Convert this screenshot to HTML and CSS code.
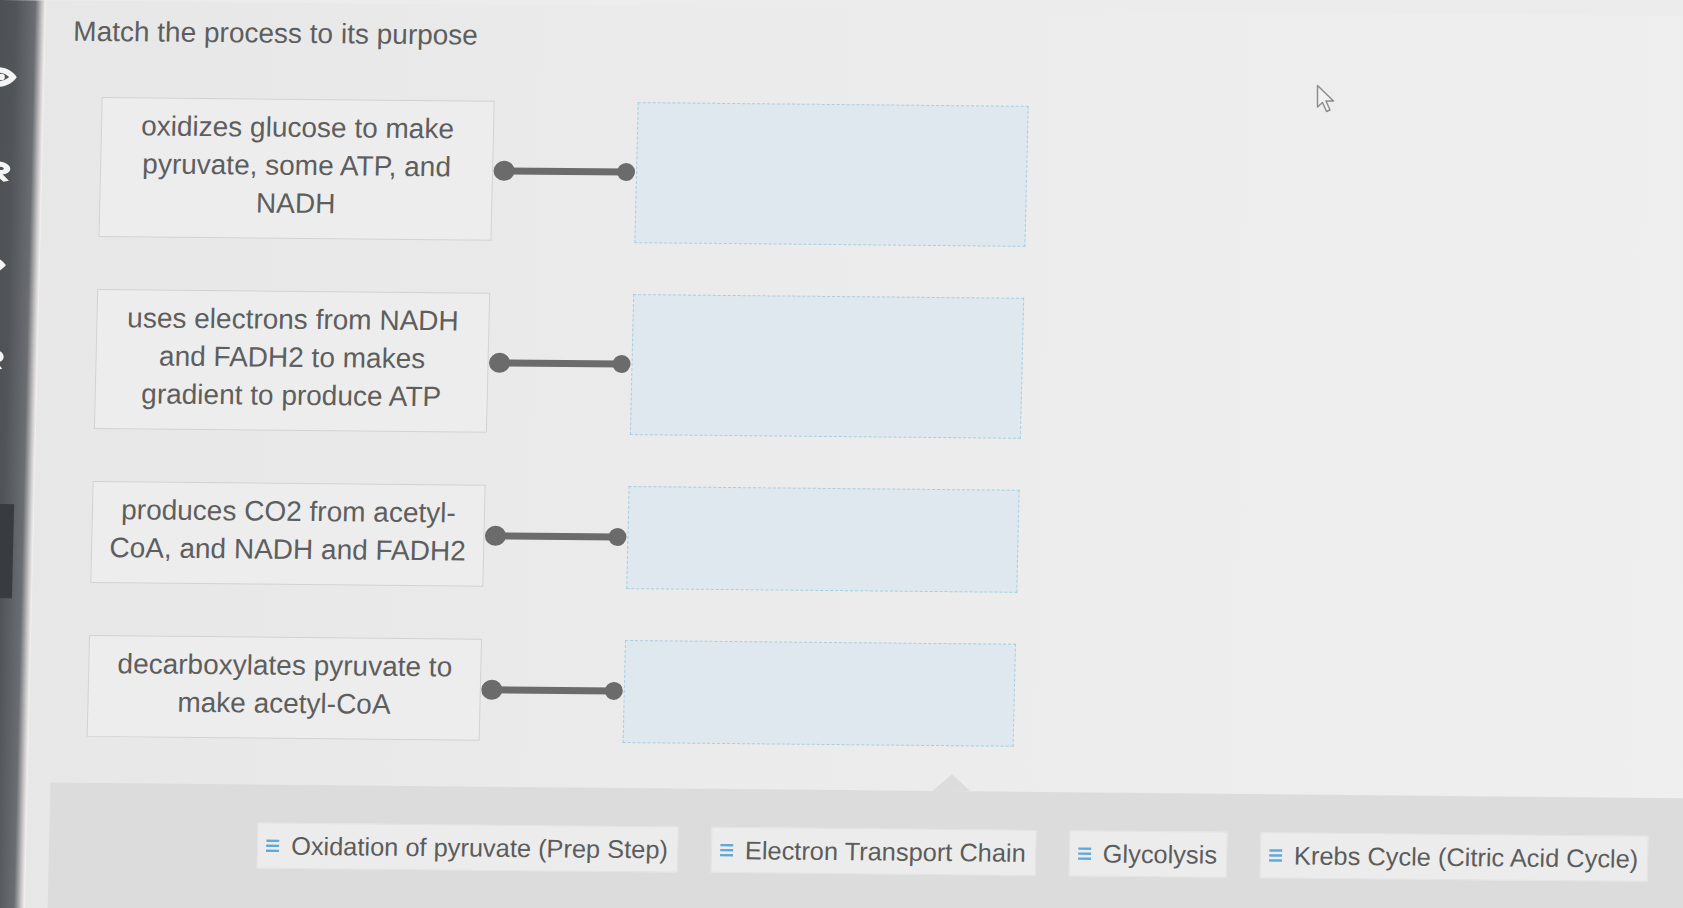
FILE: index.html
```html
<!DOCTYPE html>
<html lang="en">
<head>
<meta charset="utf-8">
<title>Match the process to its purpose</title>
<link rel="stylesheet" href="styles.css">
</head>
<body>
<div class="page">
  <aside class="sidebar">
    <svg class="side-icon" viewBox="0 0 20 24" width="22" height="26"><path d="M0 3 C7 3 14 7 17 12 C14 17 7 21 0 21 L0 16 C4 16 8 14 10 12 C8 10 4 8 0 8 Z" fill="#f4f4f4"/><circle cx="3" cy="12" r="3" fill="#f4f4f4"/></svg>
    <svg class="side-icon" viewBox="0 0 20 24" width="22" height="26"><path d="M0 3 C7 3 13 6 13 10 C13 13 9 15 6 15 L12 21 L7 22 L0 16 L0 11 C4 11 7 11 7 10 C7 8 4 8 0 8 Z" fill="#f4f4f4"/></svg>
    <svg class="side-icon" viewBox="0 0 20 24" width="22" height="26"><path d="M0 4 C5 6 9 9 11 12 C9 15 5 18 0 20 L0 15 C2 14 4 13 5 12 C4 11 2 10 0 9 Z" fill="#f4f4f4"/></svg>
    <svg class="side-icon" viewBox="0 0 20 24" width="22" height="26"><path d="M0 3 C6 3 11 6 11 10 C11 13 8 15 5 15 L10 21 L6 22 L0 16 L0 11 C3 11 6 11 6 10 C6 8 3 8 0 8 Z" fill="#f4f4f4"/></svg>
    <svg class="side-icon" viewBox="0 0 20 24" width="22" height="26"><path d="M0 8 C2 9 4 10 6 12 C4 14 2 15 0 16 Z" fill="#f4f4f4"/></svg>
    <div class="side-active"></div>
  </aside>
  <main class="main">
    <h1 class="title">Match the process to its purpose</h1>
    <div class="pairs">
      <div class="pair">
        <div class="prompt">oxidizes glucose to make pyruvate, some ATP, and NADH</div>
        <svg class="connector" viewBox="0 0 143 22" width="143" height="22"><line x1="11" y1="11" x2="133" y2="11" stroke="#6b6b6b" stroke-width="7"/><ellipse cx="11" cy="11" rx="10.5" ry="10" fill="#6b6b6b"/><circle cx="133" cy="11" r="9" fill="#6b6b6b"/></svg>
        <div class="drop"></div>
      </div>
      <div class="pair">
        <div class="prompt">uses electrons from NADH and FADH2 to makes gradient to produce ATP</div>
        <svg class="connector" viewBox="0 0 143 22" width="143" height="22"><line x1="11" y1="11" x2="133" y2="11" stroke="#6b6b6b" stroke-width="7"/><ellipse cx="11" cy="11" rx="10.5" ry="10" fill="#6b6b6b"/><circle cx="133" cy="11" r="9" fill="#6b6b6b"/></svg>
        <div class="drop"></div>
      </div>
      <div class="pair">
        <div class="prompt">produces CO2 from acetyl-CoA, and NADH and FADH2</div>
        <svg class="connector" viewBox="0 0 143 22" width="143" height="22"><line x1="11" y1="11" x2="133" y2="11" stroke="#6b6b6b" stroke-width="7"/><ellipse cx="11" cy="11" rx="10.5" ry="10" fill="#6b6b6b"/><circle cx="133" cy="11" r="9" fill="#6b6b6b"/></svg>
        <div class="drop"></div>
      </div>
      <div class="pair">
        <div class="prompt">decarboxylates pyruvate to make acetyl-CoA</div>
        <svg class="connector" viewBox="0 0 143 22" width="143" height="22"><line x1="11" y1="11" x2="133" y2="11" stroke="#6b6b6b" stroke-width="7"/><ellipse cx="11" cy="11" rx="10.5" ry="10" fill="#6b6b6b"/><circle cx="133" cy="11" r="9" fill="#6b6b6b"/></svg>
        <div class="drop"></div>
      </div>
    </div>
    <div class="bank">
      <div class="chips">
        <div class="chip"><svg class="grip" viewBox="0 0 14 16" width="14" height="16"><rect x="0" y="2" width="13" height="2.4" fill="#62a9d9"/><rect x="0" y="7" width="13" height="2.4" fill="#62a9d9"/><rect x="0" y="12" width="13" height="2.4" fill="#62a9d9"/></svg><span>Oxidation of pyruvate (Prep Step)</span></div>
        <div class="chip"><svg class="grip" viewBox="0 0 14 16" width="14" height="16"><rect x="0" y="2" width="13" height="2.4" fill="#62a9d9"/><rect x="0" y="7" width="13" height="2.4" fill="#62a9d9"/><rect x="0" y="12" width="13" height="2.4" fill="#62a9d9"/></svg><span>Electron Transport Chain</span></div>
        <div class="chip"><svg class="grip" viewBox="0 0 14 16" width="14" height="16"><rect x="0" y="2" width="13" height="2.4" fill="#62a9d9"/><rect x="0" y="7" width="13" height="2.4" fill="#62a9d9"/><rect x="0" y="12" width="13" height="2.4" fill="#62a9d9"/></svg><span>Glycolysis</span></div>
        <div class="chip"><svg class="grip" viewBox="0 0 14 16" width="14" height="16"><rect x="0" y="2" width="13" height="2.4" fill="#62a9d9"/><rect x="0" y="7" width="13" height="2.4" fill="#62a9d9"/><rect x="0" y="12" width="13" height="2.4" fill="#62a9d9"/></svg><span>Krebs Cycle (Citric Acid Cycle)</span></div>
      </div>
    </div>
  </main>
</div>
<svg class="cursor" viewBox="0 0 22 30" width="22" height="30"><path d="M1.5 1.5 L1.5 23 L6.5 18.5 L10.5 27.5 L14 26 L10 17 L17.5 17 Z" fill="#f1f1f1" stroke="#8a8a8a" stroke-width="1.4" stroke-linejoin="round"/></svg>
</body>
</html>
```
FILE: styles.css
```css
html, body {
  margin: 0;
  padding: 0;
}
body {
  width: 1683px;
  height: 908px;
  overflow: hidden;
  background: #ececec;
  font-family: "Liberation Sans", Arial, sans-serif;
  color: #5e5e5e;
  position: relative;
}
.page {
  display: flex;
  width: 1760px;
  height: 940px;
  transform: rotate(0.55deg) skewX(-0.8deg);
  transform-origin: 0 0;
  background: linear-gradient(to right, #e7e7e7 0%, #ebebeb 40%, #efefef 100%);
}
.sidebar {
  flex: 0 0 auto;
  width: 46px;
  margin-left: -30px;
  padding-left: 30px;
  background: linear-gradient(to right, #45484d 0%, #515459 60%, #6a6d71 86%, #c9c7c8 95%, #f7f3f3 100%);
  display: flex;
  flex-direction: column;
  padding-top: 64px;
  box-sizing: content-box;
}
.side-icon {
  display: block;
  margin-bottom: 68px;
}
.side-active {
  margin-top: -30px;
  height: 94px;
  width: 26px;
  background: #383b40;
}
.main {
  flex: 1 1 auto;
  display: flex;
  flex-direction: column;
  min-width: 0;
  margin-left: -3px;
}
.title {
  margin: 0;
  padding: 15px 0 0 31px;
  font-size: 28px;
  line-height: 32px;
  font-weight: normal;
  color: #5e5e5e;
}
.pairs {
  display: flex;
  flex-direction: column;
  gap: 52px;
  padding: 49px 0 0 61px;
}
.pair {
  display: flex;
  align-items: center;
}
.prompt {
  box-sizing: border-box;
  width: 393px;
  padding: 9px 13px 15px;
  border: 1px solid #d2d2d2;
  background: #ededed;
  text-align: center;
  font-size: 28px;
  line-height: 38px;
  color: #5e5e5e;
}
.connector {
  flex: 0 0 auto;
  display: block;
}
.drop {
  box-sizing: border-box;
  width: 391px;
  align-self: stretch;
  margin: 0 0 -1px;
  background: #dee8ee;
  border: 1px dashed #a9cfe0;
}
.bank {
  flex: 1 1 auto;
  margin: 46px -60px 0 26px;
  background: #dcdcdc;
  position: relative;
  padding: 38px 0 0 208px;
}
.bank::before {
  content: "";
  position: absolute;
  left: 882px;
  top: -17px;
  border-left: 19px solid transparent;
  border-right: 19px solid transparent;
  border-bottom: 17px solid #dcdcdc;
}
.chips {
  display: flex;
  gap: 33px;
  align-items: flex-start;
}
.chip {
  display: flex;
  align-items: center;
  gap: 11px;
  height: 46px;
  box-sizing: border-box;
  padding: 0 9px 0 8px;
  background: #ececec;
  border: 1px solid #e3e3e3;
  font-size: 25.4px;
  color: #5c5c5c;
  white-space: nowrap;
}
.grip {
  display: block;
  flex: 0 0 auto;
}
.cursor {
  position: absolute;
  left: 1316px;
  top: 84px;
}
```
